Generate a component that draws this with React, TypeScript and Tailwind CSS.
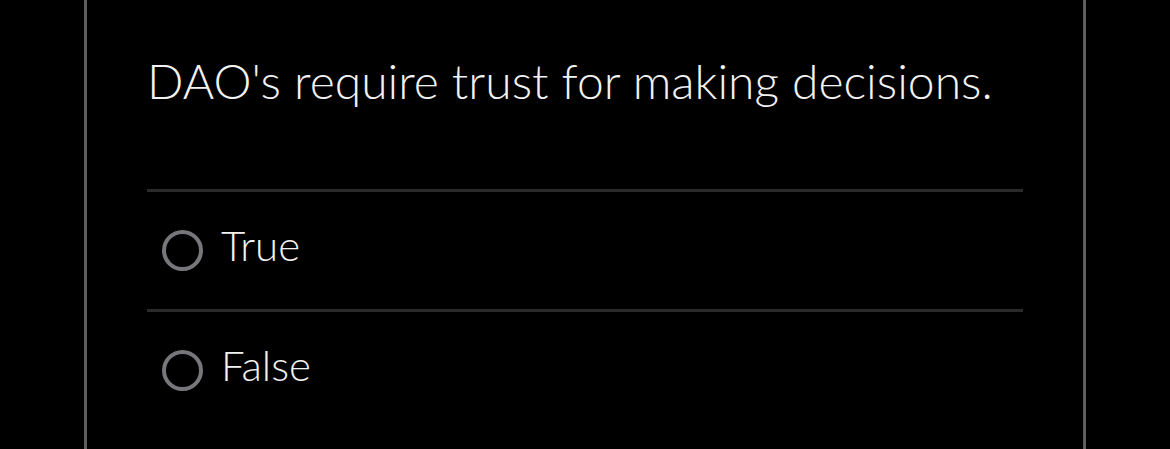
import React from "react";

const options = ["True", "False"];

const App: React.FC = () => {
  const [selected, setSelected] = React.useState<string | null>(null);

  return (
    <div
      className="w-[1170px] h-[449px] bg-black overflow-hidden"
      style={{ fontFamily: "'Lato Light', Lato, 'Open Sans', sans-serif" }}
    >
      <div className="ml-[84px] w-[1002px] h-full border-x-[3px] border-[#5e5e5e] px-[60px]">
        <div className="pt-[52px] pb-[80px]">
          <h2 className="text-[48px] leading-[57px] font-light text-[#f2f2f2]">
            DAO's require trust for making decisions.
          </h2>
        </div>
        {options.map((opt) => (
          <div key={opt} className="border-t-[3px] border-[#2a2a2a]">
            <button
              onClick={() => setSelected(opt)}
              className="flex items-center h-[117px] w-full text-left"
            >
              <span className="ml-[15px] w-[41px] h-[41px] rounded-full border-4 border-[#77777b] flex items-center justify-center shrink-0">
                {selected === opt && (
                  <span className="w-[19px] h-[19px] rounded-full bg-[#77777b]" />
                )}
              </span>
              <span className="ml-[18px] mb-[12px] text-[42px] font-light text-[#f2f2f2] leading-none">
                {opt}
              </span>
            </button>
          </div>
        ))}
      </div>
    </div>
  );
};

export default App;
